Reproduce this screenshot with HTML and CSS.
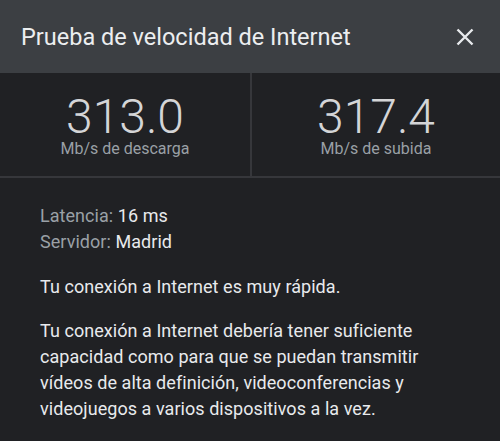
FILE: index.html
```html
<!DOCTYPE html>
<html lang="es">
<head>
  <meta charset="UTF-8" />
  <meta name="viewport" content="width=device-width, initial-scale=1.0"/>
  <title>Prueba de velocidad de Internet</title>
  <link rel="stylesheet" href="styles.css">
</head>
<body>

  <div class="header">
    <h1>Prueba de velocidad de Internet</h1>
    <button class="close" aria-label="Cerrar">
      <svg width="18" height="18" viewBox="0 0 18 18">
        <path d="M1.5 1.5 L16.5 16.5 M16.5 1.5 L1.5 16.5" stroke="#e8eaed" stroke-width="2.4" fill="none"/>
      </svg>
    </button>
  </div>

  <div class="stats">
    <div class="stat">
      <div class="value">313.0</div>
      <div class="unit">Mb/s de descarga</div>
    </div>
    <div class="stat">
      <div class="value">317.4</div>
      <div class="unit">Mb/s de subida</div>
    </div>
  </div>

  <div class="details">
    <div class="info">
      <div><span class="label">Latencia:</span> 16 ms</div>
      <div><span class="label">Servidor:</span> Madrid</div>
    </div>
    <p>Tu conexión a Internet es muy rápida.</p>
    <p>Tu conexión a Internet debería tener suficiente capacidad como para que se puedan transmitir vídeos de alta definición, videoconferencias y videojuegos a varios dispositivos a la vez.</p>
  </div>

</body>
</html>
```

FILE: styles.css
```css
body {
  margin: 0;
  background-color: #202124;
  font-family: Roboto, "Liberation Sans", sans-serif;
  color: #e8eaed;
}

.header {
  height: 73px;
  background-color: #3c3f43;
  display: flex;
  align-items: center;
  justify-content: space-between;
  padding: 0 26px 0 21px;
}

.header h1 {
  margin: 0;
  font-size: 23.5px;
  font-weight: 400;
  color: #eceef0;
}

.close {
  background: none;
  border: none;
  padding: 0;
  display: flex;
}

.stats {
  display: grid;
  grid-template-columns: 1fr 1fr;
  border-bottom: 2px solid #36373b;
}

.stat {
  height: 103px;
  display: flex;
  flex-direction: column;
  align-items: center;
  justify-content: center;
}

.stat + .stat {
  border-left: 2px solid #36373b;
}

.value {
  font-size: 48px;
  font-weight: 300;
  line-height: 48px;
  color: #d4d5d7;
}

.unit {
  font-size: 16px;
  line-height: 16px;
  color: #9aa0a6;
}

.details {
  padding: 25px 60px 0 40px;
  font-size: 18px;
  line-height: 26px;
  letter-spacing: 0.05px;
}

.info {
  margin-bottom: 19px;
}

.label {
  color: #9aa0a6;
}

.details p {
  margin: 0 0 18px;
}
```
